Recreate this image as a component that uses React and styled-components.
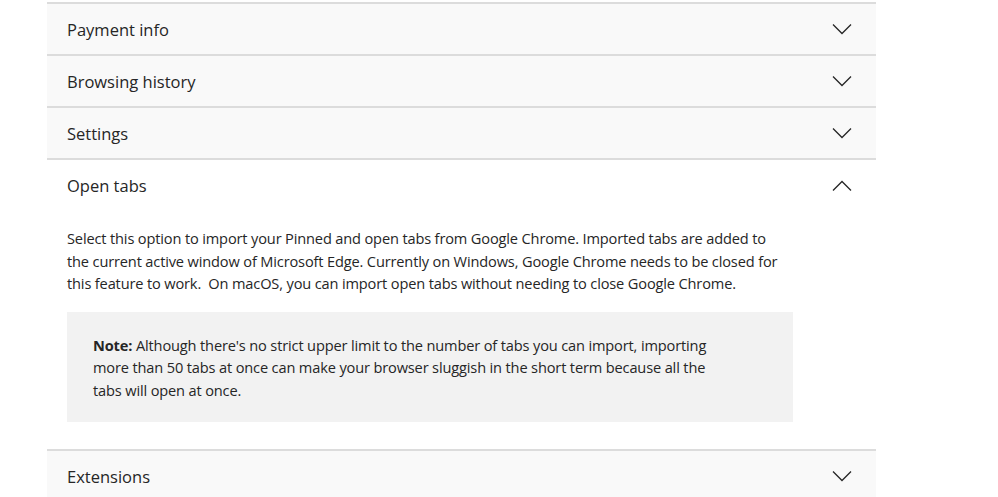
import React, { useState } from "react";
import styled, { createGlobalStyle } from "styled-components";

const Global = createGlobalStyle`
  body {
    margin: 0;
    background: #fff;
    font-family: "Segoe UI", "Open Sans", "Liberation Sans", sans-serif;
    color: #262626;
  }
`;

const Page = styled.div`
  padding: 2px 0 0 47px;
`;

const Accordion = styled.div`
  width: 829px;
`;

const Item = styled.div`
  border-top: 2px solid #dcdcdc;
  background: ${(p) => (p.$open ? "#fff" : "#f9f9f9")};
`;

const Header = styled.button`
  display: flex;
  align-items: center;
  justify-content: space-between;
  width: 100%;
  height: ${(p) => (p.$open ? "51px" : "50px")};
  padding: 0 24px 0 20px;
  border: 0;
  background: transparent;
  font-family: inherit;
  font-size: 16.5px;
  color: #262626;
  cursor: pointer;
  text-align: left;
`;

const Body = styled.div`
  padding: 16px 83px 27px 20px;
`;

const Text = styled.p`
  margin: 0;
  max-width: ${(p) => p.$max || "none"};
  font-size: 14.6px;
  line-height: 22.5px;
  letter-spacing: -0.15px;
`;

const Note = styled.div`
  margin-top: 17px;
  background: #f2f2f2;
  padding: 22px 79px 21px 26px;
`;

const Chevron = ({ up }) => (
  <svg width="20" height="11" viewBox="0 0 20 11" fill="none">
    <path
      d={up ? "M1 10.5 L10 1.5 L19 10.5" : "M1 0.5 L10 9.5 L19 0.5"}
      stroke="#262626"
      strokeWidth="1.3"
    />
  </svg>
);

const items = [
  "Payment info",
  "Browsing history",
  "Settings",
  "Open tabs",
  "Extensions",
];

export default function App() {
  const [open, setOpen] = useState("Open tabs");
  return (
    <>
      <Global />
      <Page>
        <Accordion>
          {items.map((name) => {
            const isOpen = open === name;
            return (
              <Item key={name} $open={isOpen}>
                <Header $open={isOpen} onClick={() => setOpen(isOpen ? null : name)}>
                  {name}
                  <Chevron up={isOpen} />
                </Header>
                {isOpen && (
                  <Body>
                    <Text $max="718px">
                      Select this option to import your Pinned and open tabs
                      from Google Chrome. Imported tabs are added to the
                      current active window of Microsoft Edge. Currently on
                      Windows, Google Chrome needs to be closed for this
                      feature to work.&nbsp; On macOS, you can import open tabs
                      without needing to close Google Chrome.
                    </Text>
                    <Note>
                      <Text>
                        <b>Note:</b> Although there's no strict upper limit to
                        the number of tabs you can import, importing more than
                        50 tabs at once can make your browser sluggish in the
                        short term because all the tabs will open at once.
                      </Text>
                    </Note>
                  </Body>
                )}
              </Item>
            );
          })}
        </Accordion>
      </Page>
    </>
  );
}
